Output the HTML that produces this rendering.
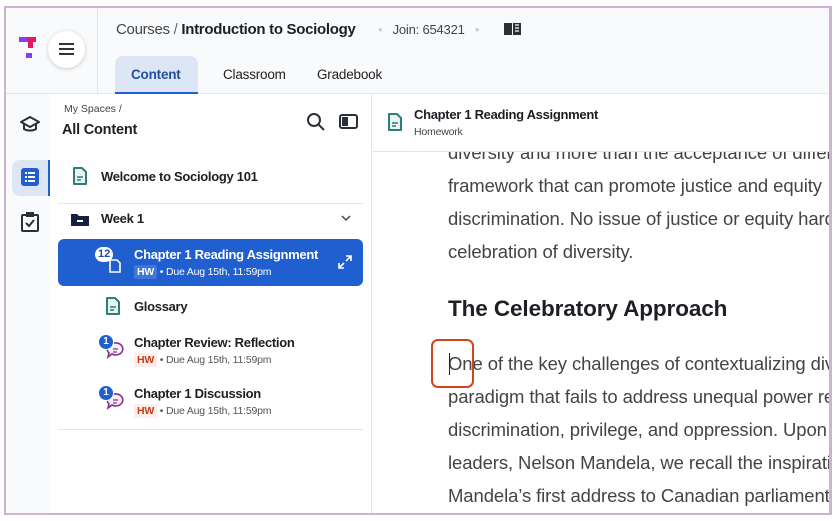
<!DOCTYPE html>
<html><head><style>
*{box-sizing:border-box;margin:0;padding:0}
body{width:836px;height:521px;background:#fff;font-family:"Liberation Sans",sans-serif;position:relative;overflow:hidden;color:#1d1f24}
.frame{position:absolute;left:4px;top:6px;width:828px;height:509px;border:2px solid #cfb0d6;border-right-width:3px;background:#f9fafc;overflow:hidden}
.abs{position:absolute}
.hdr{left:0;top:0;width:826px;height:86px;border-bottom:1px solid #e3e5ea;background:#f9fafc}
.vline{width:1px;background:#e3e5ea}
.t{white-space:nowrap}
.ti{font-size:13px;font-weight:bold;letter-spacing:-0.3px}
.sub{font-size:10.5px;color:#555;letter-spacing:-0.2px}
.body p{white-space:nowrap}
</style></head><body>
<div class="frame">
 <div class="abs hdr"></div>
 <div class="abs" style="left:13px;top:29px;width:10px;height:5px;background:#8b3cf0"></div>
 <div class="abs" style="left:21px;top:29px;width:9px;height:5px;background:#e6195a"></div>
 <div class="abs" style="left:22px;top:34px;width:5px;height:6px;background:#e6195a"></div>
 <div class="abs" style="left:20px;top:45px;width:6px;height:5px;background:#8b3cf0"></div>
 <div class="abs" style="left:42px;top:23px;width:37px;height:37px;border-radius:50%;background:#fff;box-shadow:0 1px 4px rgba(0,0,0,.2)"></div>
 <div class="abs" style="left:53px;top:35px;width:15px;height:2px;background:#333;box-shadow:0 5px 0 #333,0 10px 0 #333"></div>
 <div class="abs vline" style="left:91px;top:0;height:86px"></div>
 <div class="abs t" style="left:110px;top:13px;font-size:15px;color:#444;letter-spacing:-0.3px">Courses <span style="color:#666">/</span> <b style="color:#1d1f24">Introduction to Sociology</b></div>
 <div class="abs t" style="left:372px;top:14px;font-size:13px;color:#444;letter-spacing:-0.2px"><span style="color:#ccc">•</span>&nbsp;&nbsp; Join: 654321 &nbsp;&nbsp;<span style="color:#ccc">•</span></div>
 <svg class="abs" style="left:497px;top:13px" width="20" height="16" viewBox="0 0 20 16"><path d="M1 2h8v12H1z" fill="#2b2f38"/><path d="M10 2h8v12h-8z" fill="#2b2f38"/><path d="M12 4h4M12 7h4M12 10h4" stroke="#fff" stroke-width="1.2"/></svg>
 <div class="abs" style="left:109px;top:48px;width:83px;height:38px;background:#dde6f5;border-radius:8px 8px 0 0;border-bottom:2px solid #1f5fcf"></div>
 <div class="abs t" style="left:125px;top:59px;font-size:13.5px;font-weight:bold;color:#1f4f9f;letter-spacing:-0.2px">Content</div>
 <div class="abs t" style="left:217px;top:59px;font-size:13.5px;color:#222;letter-spacing:-0.2px">Classroom</div>
 <div class="abs t" style="left:311px;top:59px;font-size:13.5px;color:#222;letter-spacing:-0.2px">Gradebook</div>
 <svg class="abs" style="left:13px;top:107px" width="22" height="18" viewBox="0 0 22 18"><path d="M11 2 2 7l9 5 9-5z" fill="none" stroke="#2b2f38" stroke-width="2" stroke-linejoin="round"/><path d="M5 9v5c3 2 9 2 12 0V9" fill="none" stroke="#2b2f38" stroke-width="2"/></svg>
 <div class="abs" style="left:6px;top:152px;width:38px;height:36px;background:#dde6f5;border-radius:8px 0 0 8px;border-right:2px solid #1f5fcf"></div>
 <div class="abs" style="left:15px;top:160px;width:18px;height:18px;background:#1f5fcf;border-radius:3px"></div>
 <svg class="abs" style="left:15px;top:160px" width="18" height="18"><g fill="#fff"><rect x="4" y="4" width="2" height="2"/><rect x="7" y="4" width="7" height="2"/><rect x="4" y="8" width="2" height="2"/><rect x="7" y="8" width="7" height="2"/><rect x="4" y="12" width="2" height="2"/><rect x="7" y="12" width="7" height="2"/></g></svg>
 <svg class="abs" style="left:14px;top:203px" width="20" height="22" viewBox="0 0 20 22"><rect x="2" y="4" width="16" height="16" rx="1" fill="none" stroke="#2b2f38" stroke-width="2"/><rect x="6" y="1" width="8" height="5" fill="#2b2f38"/><path d="M6 12l3 3 5-6" fill="none" stroke="#2b2f38" stroke-width="2"/></svg>
 <div class="abs" style="left:44px;top:86px;width:322px;height:430px;background:#fff;border-right:1px solid #e3e5ea"></div>
 <div class="abs t" style="left:58px;top:95px;font-size:10.5px;color:#444">My Spaces /</div>
 <div class="abs t" style="left:56px;top:114px;font-size:14.5px;font-weight:bold;letter-spacing:-0.2px">All Content</div>
 <svg class="abs" style="left:300px;top:104px" width="20" height="20"><circle cx="8" cy="8" r="6" fill="none" stroke="#2b2f38" stroke-width="2"/><path d="M12.5 12.5 18 18" stroke="#2b2f38" stroke-width="2"/></svg>
 <svg class="abs" style="left:333px;top:106px" width="20" height="16"><rect x="1" y="1" width="17" height="13" rx="2" fill="none" stroke="#2b2f38" stroke-width="2"/><rect x="3" y="3" width="6" height="9" fill="#2b2f38"/></svg>
 <svg class="abs" style="left:66px;top:158px" width="16" height="20"><path d="M2 2h8l4 4v12H2z" fill="#e6f4f2" stroke="#2f7d78" stroke-width="2" stroke-linejoin="round"/><path d="M5 11h6M5 14h4" stroke="#2f7d78" stroke-width="1.5"/></svg>
 <div class="abs t ti" style="left:95px;top:161px">Welcome to Sociology 101</div>
 <div class="abs" style="left:52px;top:195px;width:305px;height:1px;background:#e3e5ea"></div>
 <svg class="abs" style="left:64px;top:203px" width="20" height="16"><path d="M1 3h6l2 2h10v10H1z" fill="#132040"/><rect x="7" y="9" width="6" height="2" fill="#fff"/></svg>
 <div class="abs t ti" style="left:95px;top:203px">Week 1</div>
 <svg class="abs" style="left:334px;top:206px" width="12" height="8"><path d="M2 2l4 4 4-4" fill="none" stroke="#444" stroke-width="1.5"/></svg>
 <div class="abs" style="left:52px;top:231px;width:305px;height:47px;background:#1f5fcf;border-radius:6px"></div>
 <svg class="abs" style="left:102px;top:250px" width="14" height="16"><path d="M2 2h7l3 3v9H2z" fill="none" stroke="#fff" stroke-width="1.6"/></svg>
 <div class="abs t" style="left:89px;top:239px;height:15px;padding:0 3px;background:#fff;color:#1f4f9f;border-radius:8px;font-size:11px;font-weight:bold;line-height:15px">12</div>
 <div class="abs t ti" style="left:128px;top:239px;color:#fff">Chapter 1 Reading Assignment</div>
 <div class="abs t sub" style="left:128px;top:258px;color:#fff"><span style="background:#3e77d8;padding:1px 3px;border-radius:2px;font-weight:bold">HW</span> • Due Aug 15th, 11:59pm</div>
 <svg class="abs" style="left:331px;top:246px" width="16" height="16"><path d="M9 2h5v5M14 2 9 7M7 14H2V9M2 14l5-5" fill="none" stroke="#fff" stroke-width="1.6"/></svg>
 <svg class="abs" style="left:99px;top:288px" width="16" height="20"><path d="M2 2h8l4 4v12H2z" fill="#e6f4f2" stroke="#2f7d78" stroke-width="2" stroke-linejoin="round"/><path d="M5 11h6M5 14h4" stroke="#2f7d78" stroke-width="1.5"/></svg>
 <div class="abs t ti" style="left:128px;top:291px">Glossary</div>
 <svg class="abs" style="left:100px;top:333px" width="18" height="18"><path d="M9 2a7 6 0 1 1-3 11l-4 3 1-4A7 6 0 0 1 9 2z" fill="#f6eef8" stroke="#8a2f8a" stroke-width="1.6"/><path d="M7 8h5M7 11h4" stroke="#8a2f8a" stroke-width="1.3"/></svg>
 <div class="abs" style="left:92px;top:326px;width:16px;height:16px;border-radius:50%;background:#1f5fcf;border:1.5px solid #fff;color:#fff;font-size:10px;font-weight:bold;text-align:center;line-height:13px">1</div>
 <div class="abs t ti" style="left:128px;top:327px">Chapter Review: Reflection</div>
 <div class="abs t sub" style="left:128px;top:346px"><span style="background:#fdeeea;color:#c63b1c;padding:1px 3px;font-weight:bold">HW</span> • Due Aug 15th, 11:59pm</div>
 <svg class="abs" style="left:100px;top:384px" width="18" height="18"><path d="M9 2a7 6 0 1 1-3 11l-4 3 1-4A7 6 0 0 1 9 2z" fill="#f6eef8" stroke="#8a2f8a" stroke-width="1.6"/><path d="M7 8h5M7 11h4" stroke="#8a2f8a" stroke-width="1.3"/></svg>
 <div class="abs" style="left:92px;top:377px;width:16px;height:16px;border-radius:50%;background:#1f5fcf;border:1.5px solid #fff;color:#fff;font-size:10px;font-weight:bold;text-align:center;line-height:13px">1</div>
 <div class="abs t ti" style="left:128px;top:378px">Chapter 1 Discussion</div>
 <div class="abs t sub" style="left:128px;top:397px"><span style="background:#fdeeea;color:#c63b1c;padding:1px 3px;font-weight:bold">HW</span> • Due Aug 15th, 11:59pm</div>
 <div class="abs" style="left:52px;top:421px;width:305px;height:1px;background:#e3e5ea"></div>
 <div class="abs" style="left:367px;top:86px;width:462px;height:430px;background:#fff"></div>
 <div class="abs" style="left:367px;top:143px;width:462px;height:1px;background:#e3e5ea"></div>
 <svg class="abs" style="left:381px;top:104px" width="16" height="20"><path d="M2 2h8l4 4v12H2z" fill="#e6f4f2" stroke="#2f7d78" stroke-width="2" stroke-linejoin="round"/><path d="M5 11h6M5 14h4" stroke="#2f7d78" stroke-width="1.5"/></svg>
 <div class="abs t ti" style="left:408px;top:99px">Chapter 1 Reading Assignment</div>
 <div class="abs t sub" style="left:408px;top:118px;color:#444">Homework</div>
 <div class="abs body" style="left:442px;top:144px;width:387px;height:370px;overflow:hidden;font-size:18.5px;color:#444;line-height:33px;letter-spacing:-0.1px">
  <p style="margin-top:-16px">diversity and more than the acceptance of differences</p>
  <p>framework that can promote justice and equity</p>
  <p>discrimination. No issue of justice or equity hard</p>
  <p>celebration of diversity.</p>
  <p style="font-size:22.5px;font-weight:bold;color:#1d1f24;margin-top:23px;line-height:36px">The Celebratory Approach</p>
  <p style="margin-top:20px">One of the key challenges of contextualizing diversity</p>
  <p>paradigm that fails to address unequal power rel</p>
  <p>discrimination, privilege, and oppression. Upon</p>
  <p>leaders, Nelson Mandela, we recall the inspiration</p>
  <p>Mandela’s first address to Canadian parliament</p>
 </div>
 <div class="abs" style="left:425px;top:331px;width:43px;height:49px;border:2px solid #d0451b;border-radius:7px"></div>
 <div class="abs" style="left:443px;top:345px;width:1px;height:22px;background:#222"></div>
</div>
</body></html>
